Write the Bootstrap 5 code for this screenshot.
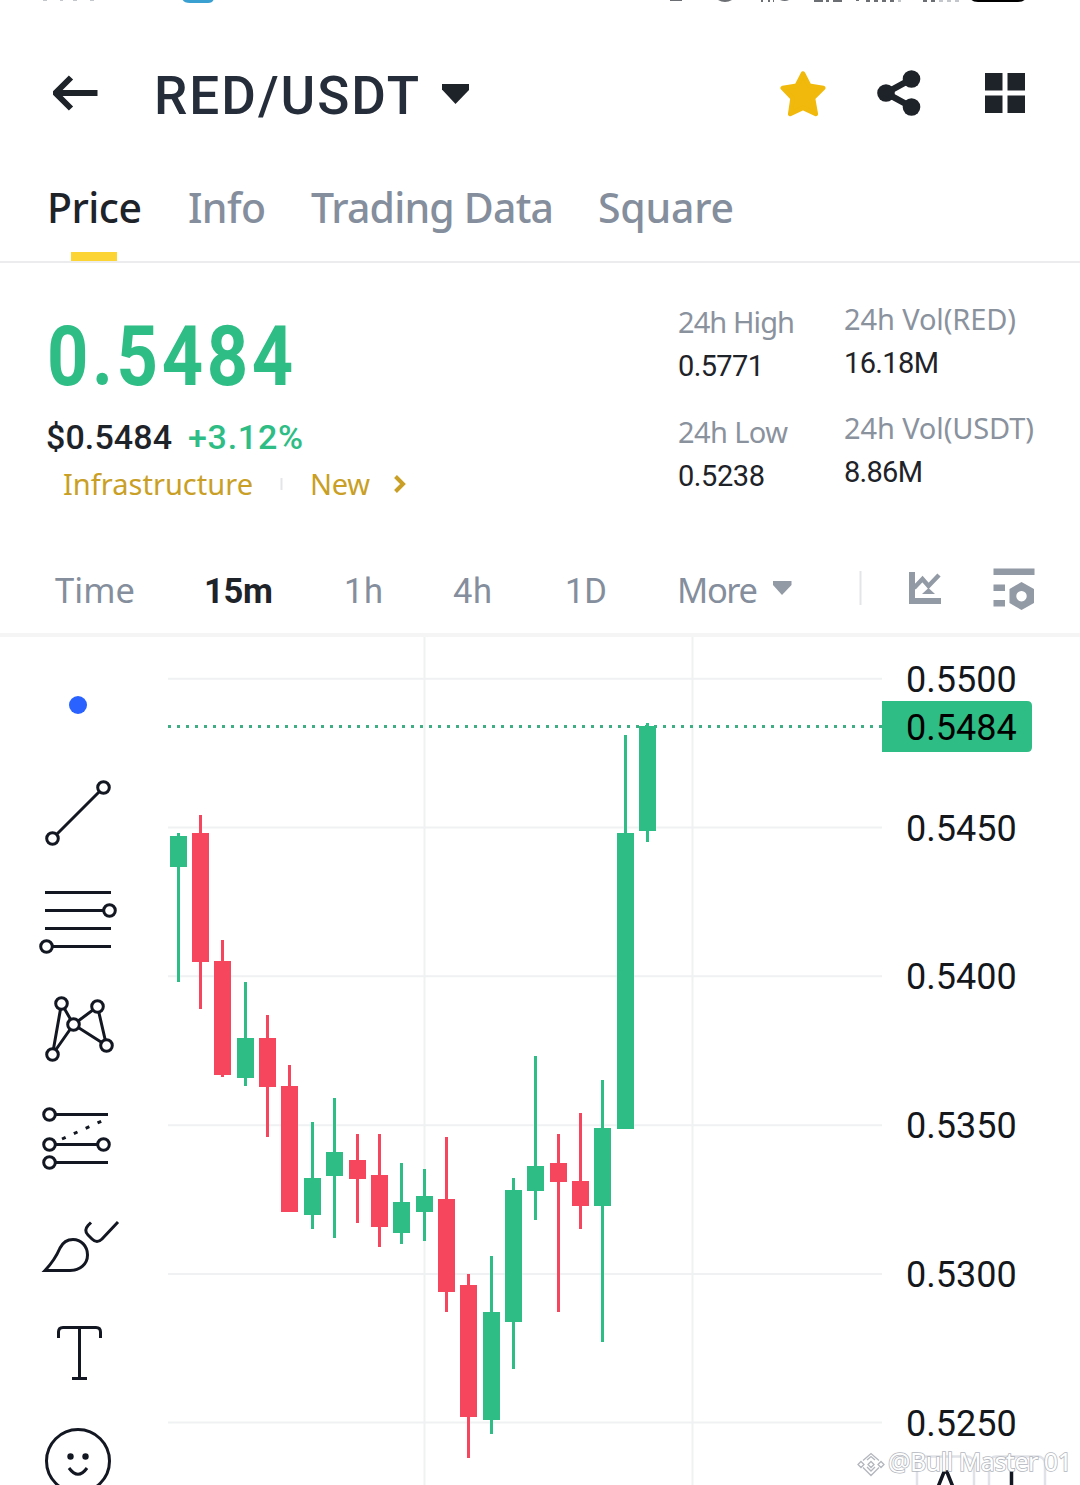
<!DOCTYPE html>
<html lang="en">
<head>
<meta charset="utf-8">
<meta name="viewport" content="width=device-width, initial-scale=1">
<title>RED/USDT</title>
<link href="https://cdn.jsdelivr.net/npm/bootstrap@5.3.0/dist/css/bootstrap.min.css" rel="stylesheet">
<style>
body{background:#fff;color:#1e2329;font-family:Roboto,sans-serif;width:1080px;height:1485px;overflow:hidden}
.app{height:1485px;overflow:hidden}
svg{display:block;flex:none}
[data-w]{white-space:nowrap;display:block;flex:none}
.lbl{font-family:"Noto Sans",sans-serif}
.gray{color:#848e9c}
.status{height:48px}
.head{height:92px;padding-left:53px}
.pair{font-size:53px;line-height:60px;font-weight:500;color:#252d3a;margin-left:53px;margin-top:4px}
.tabs{height:123px;padding:0 0 0 47px;border-bottom:2px solid #ececee}
.tabs .lbl{font-size:41px;line-height:56px;font-weight:500;margin-top:39px}
.active-bar{width:46px;height:9px;background:#fcd535;margin:17px 0 0 24px}
.summary{height:287px}
.left-col{width:678px;padding:54px 0 0 46px}
.big{font-size:83px;line-height:80px;font-weight:700;color:#2ebd85;margin-left:1px;transform:scaleX(.87);transform-origin:left}
.sub{font-size:34px;line-height:44px;font-weight:500;margin-top:18px}
.up{color:#2ebd85}
.tags{font-size:29px;line-height:40px;color:#c99f25;padding-left:17px;margin-top:5px}
.stat-a{width:166px;padding-top:39px}
.stat-b{padding-top:36px}
.stat-a .lbl,.stat-b .lbl{font-size:29px;line-height:40px;color:#8a929e}
.val{font-size:29px;line-height:40px;margin:4px 0 26px}
.stat-b .val{margin:4px 0 25px}
.times{height:87px;padding-left:55px;padding-bottom:3px;border-bottom:4px solid #f5f5f6}
.times [data-w]{font-size:34.5px;line-height:48px}
.times div [data-w]:not(.lbl){padding-top:1px}
.axis{font:36px Roboto,sans-serif;fill:#14171c}
.ink{stroke:#131722;stroke-width:3;fill:none}
.dot{fill:#fff}
.wm{font:25px "Noto Sans",sans-serif}
</style>
<script src="https://cdn.jsdelivr.net/npm/bootstrap@5.3.0/dist/js/bootstrap.bundle.min.js"></script>
</head>
<body>
<main class="app d-flex flex-column">
  <div class="status">
    <svg width="1080" height="6" viewBox="0 0 1080 6">
      <path d="M182 -8h32v5q0 6-6 6h-18q-8 0-8-6z" fill="#3a9fd1"/>
      <path d="M970-6h56v2q0 6-8 6h-40q-8 0-8-6z" fill="#000"/>
      <g fill="#6b6e73"><path d="M670 0h12v1h-12zM718 0h14q-7 4-14 0zM761 0h2v2h-2zM768 0h2v2h-2zM773 0h1v2h-1zM780 0h9q-4 2-9 0zM814 0h9v2h-9zM826 0h3v2h-3zM833 0h9v2h-9zM856 0h3v1h-3z"/>
      <path d="M866 0h4v2h-4zM874 0h4v2h-4zM882 0h4v2h-4zM890 0h4v2h-4zM923 0h4v2h-4zM931 0h4v2h-4z"/></g>
      <path d="M43 0h4v1h-4zM60 0h3v1h-3zM73 0h4v1h-4zM90 0h4v1h-4zM898 0h3v2h-3zM939 0h4v2h-4zM947 0h4v2h-4zM955 0h4v2h-4z" fill="#c3c6cb"/>
    </svg>
  </div>

  <header class="head d-flex align-items-center">
    <svg width="48" height="38" viewBox="52 75 48 38"><path d="M96.500 93H56M70 77.500L54.500 93l15.500 15.500" fill="none" stroke="#1e2329" stroke-width="6"/></svg>
    <h1 class="pair mb-0" data-w="265">RED/USDT</h1>
    <svg class="ms-3" width="34" height="26" viewBox="435 81 34 26"><path d="M442 84h27.500v5.500L455.500 104 442 89.500z" fill="#1e2329"/></svg>
    <div class="ms-auto d-flex">
      <svg width="300" height="60" viewBox="780 64 300 60">
        <path d="M803 73.500l6.300 12.300 14 2.200-10.300 10.200 2.800 15.800-12.800-6-12.800 6 2.300-15.800L782.700 88l14-2.200z" fill="#f0b90b" stroke="#f0b90b" stroke-width="4.500" stroke-linejoin="round"/>
        <g fill="#1e2329"><circle cx="911.500" cy="79" r="8.800"/><circle cx="886" cy="93" r="8.800"/><circle cx="911.500" cy="107" r="8.800"/>
        <path d="M911.500 79L886 93l25.500 14" fill="none" stroke="#1e2329" stroke-width="6.500"/>
        <path d="M985 73h17.500v17.500H985zM1007.500 73H1025v17.500h-17.500zM985 95.500h17.500V113H985zM1007.500 95.500H1025V113h-17.500z"/></g>
      </svg>
    </div>
  </header>

  <nav class="tabs d-flex">
    <div style="width:141px"><span class="lbl" data-w="95">Price</span><div class="active-bar"></div></div>
    <div style="width:123px"><span class="lbl gray" data-w="78">Info</span></div>
    <div style="width:287px"><span class="lbl gray" data-w="243">Trading Data</span></div>
    <div><span class="lbl gray" data-w="136">Square</span></div>
  </nav>

  <section class="summary d-flex">
    <div class="left-col">
      <div class="big" data-w="283">0.5484</div>
      <div class="sub d-flex"><span data-w="126">$0.5484</span><span class="up ms-3" data-w="115">+3.12%</span></div>
      <div class="tags lbl d-flex align-items-center">
        <span data-w="190">Infrastructure</span>
        <svg width="57" height="14" viewBox="0 0 57 14"><path d="M28.500 1v12" stroke="#e3e5e8" stroke-width="2"/></svg>
        <span data-w="60">New</span>
        <svg width="40" height="20" viewBox="0 0 40 20"><path d="M25.500 2.500L33 10l-7.500 7.500" fill="none" stroke="#c99f25" stroke-width="4"/></svg>
      </div>
    </div>
    <div class="stat-a">
      <div class="lbl" data-w="117">24h High</div><div class="val" data-w="86">0.5771</div>
      <div class="lbl" data-w="110">24h Low</div><div class="val" data-w="87">0.5238</div>
    </div>
    <div class="stat-b">
      <div class="lbl" data-w="172">24h Vol(RED)</div><div class="val" data-w="95">16.18M</div>
      <div class="lbl" data-w="190">24h Vol(USDT)</div><div class="val" data-w="79">8.86M</div>
    </div>
  </section>

  <div class="times d-flex align-items-center gray">
    <div style="width:149px"><span class="lbl" data-w="80">Time</span></div>
    <div style="width:140px;color:#1e2329;font-weight:700"><span data-w="69">15m</span></div>
    <div style="width:109px"><span data-w="39">1h</span></div>
    <div style="width:112px"><span data-w="39">4h</span></div>
    <div style="width:112px"><span data-w="42">1D</span></div>
    <span class="lbl" data-w="81">More</span>
    <svg width="322" height="60" viewBox="758 560 322 60">
      <path d="M773 581h18.500v4L782 595l-9-10z" fill="#929aa5"/>
      <path d="M860.500 571v34" stroke="#e3e5e8" stroke-width="2"/>
      <g fill="#929aa5"><path d="M909 572h6v26h26v6h-32z"/><path d="M914 588l8.500-9 6 7 10.500-11" fill="none" stroke="#929aa5" stroke-width="4.500"/><path d="M922 594l6.500-6 6.500 6z"/>
      <path d="M993.500 568.500h41v6.500h-41zM993.500 584.500h11.500v6.500h-11.500zM993.500 600h11.500v6.500h-11.500z"/>
      <path fill-rule="evenodd" d="M1021.500 582l12.500 7v14l-12.500 7-12-7v-14zm0 9a5.200 5.200 0 1 0 .01 0z"/></g>
    </svg>
  </div>

  <section class="flex-grow-1 d-flex">
    <svg width="168" height="848" viewBox="0 637 168 848">
      <circle cx="78" cy="705" r="9" fill="#2962ff"/>
      <g class="ink">
        <path d="M57 834L99 792"/>
        <circle cx="52.500" cy="838.500" r="5.800"/><circle cx="103.500" cy="787.500" r="5.800"/>
        <path d="M45 892.500h66M45 910.500h58M45 928.500h66M53 946.500h58"/><circle cx="109.500" cy="910.500" r="5.800"/><circle cx="46.500" cy="946.500" r="5.800"/>
        <path d="M61.500 1003.500L52.500 1054.500 73.500 1024.500zM73.500 1024.500L97.500 1006.500 106.500 1045.500z"/>
        <g class="dot"><circle cx="61.500" cy="1003.500" r="5.800"/><circle cx="97.500" cy="1006.500" r="5.800"/><circle cx="73.500" cy="1024.500" r="5.800"/><circle cx="106.500" cy="1045.500" r="5.800"/><circle cx="52.500" cy="1054.500" r="5.800"/></g>
        <path d="M56 1114.500h52M56 1144.500h41M56 1162.500h52"/><path d="M62 1139L104 1120" stroke-dasharray="4 9"/>
        <circle cx="49.500" cy="1114.500" r="5.800"/><circle cx="49.500" cy="1144.500" r="5.800"/><circle cx="103.500" cy="1144.500" r="5.800"/><circle cx="49.500" cy="1162.500" r="5.800"/>
        <path d="M45 1270.500C53 1262 57 1255 60 1248C63 1242 67 1239.500 73 1239.500C81 1239.500 87.500 1246 87.500 1255C87.500 1264 80 1270.500 70 1270.500z"/>
        <path d="M91 1222.500l-3 3q-4.500 5 0 9.500l4 4q5 5 10 0L118 1222"/>
        <path d="M58.500 1338v-6q0-4.500 4.500-4.500h33q4.500 0 4.500 4.500v6M79.500 1328v50M72 1378.500h15"/>
        <circle cx="78" cy="1461" r="31.500"/><path d="M69 1468q9 12.500 18 0"/>
      </g>
      <circle cx="70.500" cy="1456.500" r="3.200" fill="#131722"/><circle cx="85.500" cy="1456.500" r="3.200" fill="#131722"/>
    </svg>

    <svg width="912" height="848" viewBox="168 637 912 848">
      <path d="M168 678.800h714M168 827.500h714M168 976.300h714M168 1125.300h714M168 1274h714M168 1422.500h714M424.500 635v850M692.500 635v850" stroke="#f0f1f2" stroke-width="2" fill="none"/>
      <path d="M168 726.500H882" stroke="#3fae84" stroke-width="3" stroke-dasharray="3 6"/>
      <g id="candles"></g>
      <path d="M882 701h145q5 0 5 5v41q0 5-5 5H882z" fill="#2ebd85"/>
      <g class="axis">
        <text x="906" y="692">0.5500</text><text x="906" y="740" fill="#000">0.5484</text><text x="906" y="841">0.5450</text><text x="906" y="989">0.5400</text>
        <text x="906" y="1138">0.5350</text><text x="906" y="1287">0.5300</text><text x="906" y="1436">0.5250</text>
      </g>
      <g fill="none" stroke="#e0e2e7" stroke-width="2.500"><rect x="917" y="1456.500" width="57" height="60" rx="7"/><rect x="989" y="1456.500" width="56" height="60" rx="7"/></g>
      <path d="M938 1487l6-15h3l6 15M1011.500 1471v16" fill="none" stroke="#131722" stroke-width="3.500"/>
      <g fill="none" stroke-width="1.300" stroke="#b3b6bd"><path d="M863 1460.500l8-7 8 7M867 1460l4-3.500 4 3.500M858 1464.500l3-3 3 3-3 3zM878 1464.500l3-3 3 3-3 3zM868 1464.500l3-3 3 3-3 3zM863 1467.500l8 8 8-8M867 1467l4 4 4-4"/></g>
      <text class="wm" x="888" y="1471" textLength="184" fill="#fff" stroke="#b3b6bd" stroke-width="1.600" paint-order="stroke">@Bull Master 01</text>
    </svg>
  </section>
</main>
<script>
// x centre, wick top, wick bottom, body top, body bottom, rising
const candles = [
[178.500,833,982,836,867,1],[200.500,815,1009,833,962,0],[222.500,940,1077,961,1075,0],[245.500,982,1086,1038,1078,1],
[267.500,1015,1137,1038,1087,0],[289.500,1065,1212,1086,1212,0],[312.500,1122,1229,1178,1215,1],[334.500,1098,1238,1152,1176,1],
[357.500,1134,1223,1160,1179,0],[379.500,1134,1247,1175,1227,0],[401.500,1163,1244,1202,1233,1],[424.500,1169,1241,1196,1212,1],
[446.500,1137,1312,1199,1292,0],[468.500,1274,1458,1285,1417,0],[491.500,1256,1434,1312,1420,1],[513.500,1178,1369,1190,1322,1],
[535.500,1056,1220,1166,1191,1],[558.500,1134,1312,1163,1182,0],[580.500,1113,1229,1181,1206,0],[602.500,1080,1342,1128,1206,1],
[625.500,735,1129,833,1129,1],[647.500,723,842,726,831,1]];
document.getElementById('candles').innerHTML = candles.map(([x,h,l,t,b,up]) =>
  `<g fill="${up ? '#2ebd85' : '#f6465d'}"><rect x="${x-1.5}" y="${h}" width="3" height="${l-h}"/><rect x="${x-8.5}" y="${t}" width="17" height="${b-t}"/></g>`).join('');
// track each label out to its column width
document.querySelectorAll('[data-w]').forEach(el => {
  const w = +el.dataset.w, r = document.createRange();
  r.selectNodeContents(el);
  const squeeze = el.classList.contains('big') ? .87 : 1;
  const n = r.getBoundingClientRect().width / squeeze;
  el.style.letterSpacing = (w - n) / (el.textContent.length - 1) + 'px';
  el.style.width = w + 'px';
});
</script>
</body>
</html>
